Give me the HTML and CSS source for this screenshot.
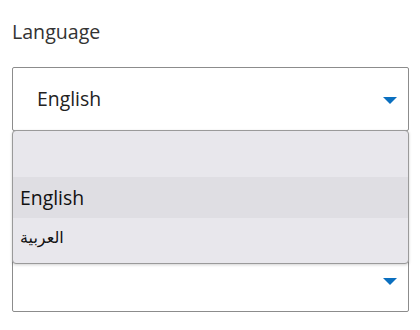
FILE: index.html
```html
<!DOCTYPE html>
<html lang="en">
<head>
<meta charset="utf-8">
<link rel="stylesheet" href="styles.css">
</head>
<body>
<div class="form">
  <div class="field">
    <label class="label">Language</label>
    <div class="select">
      <span class="value">English</span>
      <svg class="caret" width="14" height="7" viewBox="0 0 14 7"><path d="M0 0H14L7 7Z" fill="#0a6fbf"/></svg>
    </div>
    <ul class="menu">
      <li class="opt empty"></li>
      <li class="opt selected">English</li>
      <li class="opt ar" lang="ar" dir="rtl">العربية</li>
    </ul>
  </div>
  <div class="field second">
    <div class="select">
      <span class="value"></span>
      <svg class="caret" width="14" height="7" viewBox="0 0 14 7"><path d="M0 0H14L7 7Z" fill="#0a6fbf"/></svg>
    </div>
  </div>
</div>
</body>
</html>
```
FILE: styles.css
```css
html, body {
  margin: 0;
  padding: 0;
  background: #fff;
}
body {
  width: 420px;
  height: 330px;
  overflow: hidden;
  font-family: "Open Sans", "Noto Sans", sans-serif;
}
.form {
  padding: 19px 11px 0 12px;
  display: flex;
  flex-direction: column;
}
.field {
  position: relative;
  display: flex;
  flex-direction: column;
}
.label {
  font-size: 19.6px;
  line-height: 26px;
  color: #333;
  margin-bottom: 22px;
}
.select {
  box-sizing: border-box;
  width: 397px;
  height: 64px;
  border: 1px solid #8c8c8c;
  border-radius: 2px;
  display: flex;
  align-items: center;
  justify-content: space-between;
  padding: 0 11px 0 24px;
  background: #fff;
}
.value {
  font-size: 19.4px;
  color: #222;
  line-height: 26px;
}
.caret {
  display: block;
  margin-top: 3px;
}
.menu {
  position: absolute;
  left: 0;
  top: 111px;
  width: 397px;
  box-sizing: border-box;
  margin: 0;
  padding: 0;
  list-style: none;
  background: #e8e7ec;
  border: 1px solid #9a9a9a;
  border-radius: 4px;
  box-shadow: 0 1px 3px rgba(0,0,0,0.18);
  z-index: 2;
  overflow: hidden;
}
.opt {
  padding: 0 7px;
  display: flex;
  align-items: center;
}
.empty {
  height: 46px;
}
.selected {
  height: 41px;
  background: #dfdee3;
  font-size: 19.4px;
  color: #111;
}
.ar {
  height: 45px;
  box-sizing: border-box;
  padding-bottom: 6px;
  direction: rtl;
  justify-content: flex-end;
  font-family: "Liberation Sans", "DejaVu Sans", sans-serif;
  font-size: 16px;
  color: #111;
}
.second {
  margin-top: 117px;
}
```
